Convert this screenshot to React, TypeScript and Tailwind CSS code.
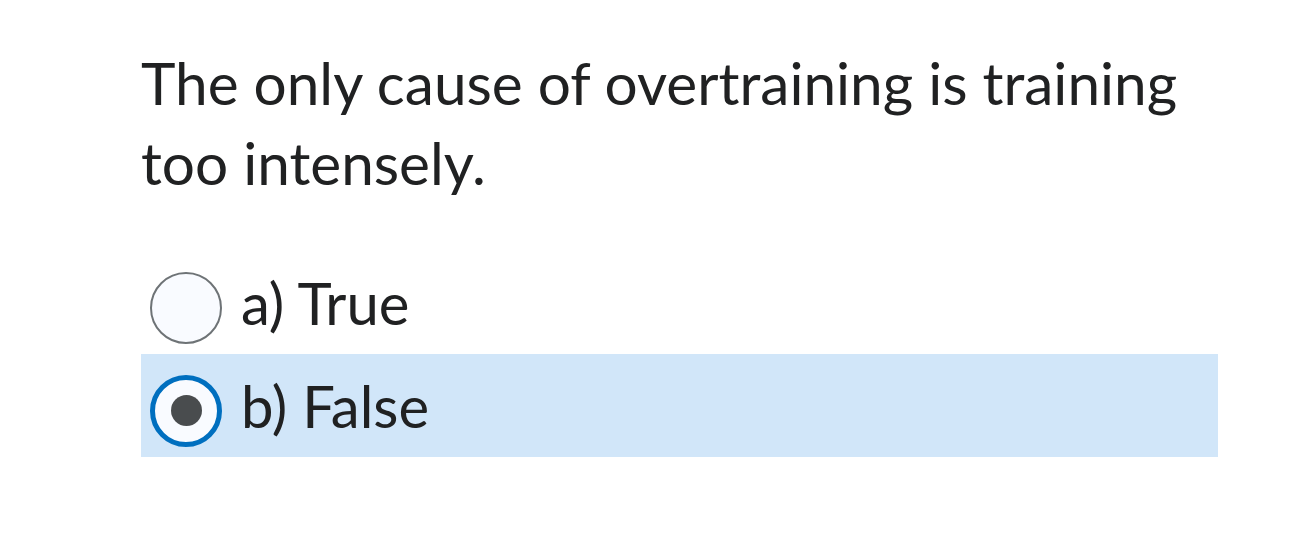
import React from "react";

export default function App() {
  return (
    <div
      className="w-[1290px] h-[538px] bg-white text-[#202122]"
      style={{ fontFamily: "Lato, 'Noto Sans', sans-serif" }}
    >
      <div className="pl-[141px] pt-[42px] w-[1218px]">
        <p className="text-[58.5px] leading-[80px] m-0">
          The only cause of overtraining is training too intensely.
        </p>
        <div className="mt-[49px] flex flex-col">
          <label className="flex items-center h-[103px] pl-[9px] gap-[19px]">
            <span className="mt-[10px] w-[72px] h-[72px] rounded-full border-[2.5px] border-[#6e7376] bg-[#f9fbff] shrink-0" />
            <span className="text-[58px] leading-[67px]">a) True</span>
          </label>
          <label className="flex items-center h-[103px] pl-[9px] gap-[19px] bg-[#d1e6f9]">
            <span className="mt-[10px] w-[72px] h-[72px] rounded-full border-[5px] border-[#006fbf] bg-[#f9fbff] shrink-0 flex items-center justify-center">
              <span className="w-[31px] h-[31px] rounded-full bg-[#494c4e]" />
            </span>
            <span className="text-[58px] leading-[67px]">b) False</span>
          </label>
        </div>
      </div>
    </div>
  );
}
